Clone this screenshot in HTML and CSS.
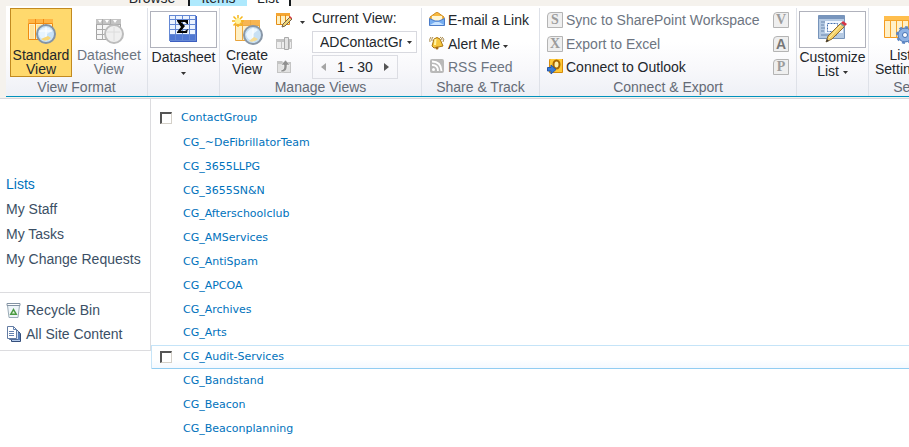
FILE: index.html
```html
<!DOCTYPE html>
<html lang="en">
<head>
<meta charset="utf-8">
<title>ContactGroup</title>
<link rel="stylesheet" href="styles.css">
</head>
<body>
<header class="ribbon-shell">
  <nav class="tabs">
    <a class="tab tab-browse" href="#">Browse</a>
    <a class="tab tab-items" href="#">Items</a>
    <a class="tab tab-list" href="#">List</a>
  </nav>
  <div class="ribbon">
    <section class="group group-format">
      <div class="group-body">
        <button class="big selected" type="button">
          <svg class="icon-big" viewBox="0 1 32 32" aria-hidden="true">
            <path d="M3.500 4.500h24v20h-24z" fill="#fff1c4" stroke="#f08a10"/>
            <path d="M3 4h25v5H3z" fill="#ffb545"/><path d="M3.500 8.500h24M10.500 4v21M18.500 4v21" stroke="#f08a10" fill="none"/>
            <path d="M5 10h4v14H5zM12 10h5v14h-5z" fill="#ffe39a"/>
            <circle cx="21" cy="19" r="9" fill="#c9e3f8" stroke="#8494a5" stroke-width="2"/>
            <path d="M14 19a7 7 0 0 1 13-3l-5 3v6a7 7 0 0 1-8-6z" fill="#e7f4ff"/><path d="M21 12v14M14 16h13" stroke="#fff" stroke-width="1"/><path d="M16 24q5 4 10-1l-3-2z" fill="#f8d778"/>
          </svg>
          <span>Standard<br>View</span>
        </button>
        <button class="big muted" type="button" disabled>
          <svg class="icon-big" viewBox="0 1 32 32" aria-hidden="true">
            <path d="M3.500 4.500h24v20h-24z" fill="#f6f6f6" stroke="#a4a4a4"/>
            <path d="M3 4h25v5H3z" fill="#c3c3c3"/><path d="M5 5h4l-2 3zM12 5h4l-2 3zM20 5h4l-2 3z" fill="#fff"/>
            <path d="M3 9.500h25M3 14.500h25M3 19.500h25M9.500 4v21M17.500 4v21" stroke="#aaa" fill="none"/>
            <circle cx="21" cy="19" r="9" fill="#efefef" stroke="#bcbcbc" stroke-width="2"/>
            <path d="M21 12v14M14 17h13" stroke="#dcdcdc"/>
          </svg>
          <span>Datasheet<br>View</span>
        </button>
      </div>
      <h2>View Format</h2>
    </section>
    <section class="group group-single">
      <div class="group-body">
        <button class="gallery" type="button">
          <span class="frame">
            <svg class="icon-big" viewBox="1 2 32 32" aria-hidden="true">
              <path d="M3 4h27v26H3z" fill="#3d5fc0"/><path d="M2 3h27v26H2z" fill="#6488d4"/>
              <path d="M3 4h5v3H3zM9 4h6v3H9zM16 4h6v3h-6zM23 4h5v3h-5zM3 8h5v4H3zM9 8h6v4H9zM16 8h6v4h-6zM23 8h5v4h-5zM3 13h5v4H3zM9 13h6v4H9zM16 13h6v4h-6zM23 13h5v4h-5zM3 18h5v4H3zM9 18h6v4H9zM16 18h6v4h-6zM23 18h5v4h-5z" fill="#edf4ff"/>
              <path d="M3 23h5v5H3zM9 23h6v5H9zM16 23h6v5h-6zM23 23h5v5h-5z" fill="#4f77d2"/>
              <path d="M10 8h11v4h-1l-2-2h-4l4 4-4 5h4l3-2-1 4H10v-1l4-5-4-6z" fill="#050505"/>
            </svg>
          </span>
          <span>Datasheet</span>
          <svg class="caret" viewBox="0 0 5 3" aria-hidden="true"><path d="M0 0h5L2.500 3z"/></svg>
        </button>
      </div>
    </section>
    <section class="group group-manage">
      <div class="group-body">
        <button class="big create" type="button">
          <svg class="icon-big" viewBox="0 1 32 32" aria-hidden="true">
            <path d="M4.500 7.500h24v20h-24z" fill="#fff0c5" stroke="#e8a33a"/><path d="M4 7h25v5H4z" fill="#f7b551"/>
            <path d="M4 12.500h25M11.500 7v21M19.500 7v21" stroke="#edaa44"/>
            <path d="M7 2v12M1 8h12M2.500 3.500l9 9M11.500 3.500l-9 9" stroke="#f6b619" stroke-width="1.500"/><circle cx="7" cy="8" r="3" fill="#fff29b"/>
            <circle cx="22" cy="22" r="9" fill="#c8e0f3" stroke="#8997a7" stroke-width="2"/><path d="M15 21q5-9 12-4l-5 4v7q-6-1-7-7z" fill="#edf7ff"/><path d="M22 15v14" stroke="#fff"/><path d="M18 28q5 2 9-2l-4-2z" fill="#f6db93"/>
          </svg>
          <span>Create<br>View</span>
        </button>
        <div class="small-stack">
          <button class="small" type="button" aria-label="Modify View">
            <svg class="icon" viewBox="0 0 16 16" aria-hidden="true"><path d="M.5 1.500h13v11H.5z" fill="#fff0c0" stroke="#e38d16"/><path d="M0 1h14v3H0z" fill="#f5a633"/><path d="M4.500 3v9M9.500 3v9" stroke="#e38d16"/><path d="M14 5l2 2-7 7-3 1 1-3z" fill="#edd474" stroke="#72614b"/><path d="M13 5l1-1 2 2-1 1z" fill="#d93942"/></svg>
            <svg class="caret" viewBox="0 0 5 3" aria-hidden="true"><path d="M0 0h5L2.500 3z"/></svg>
          </button>
          <button class="small" type="button" aria-label="Create Column" disabled>
            <svg class="icon" viewBox="0 0 16 16" aria-hidden="true"><path d="M.5 3.500h15v9H.5z" fill="#eee" stroke="#c2c2c2"/><path d="M0 3h16v3H0z" fill="#c4c4c4"/><path d="M5.500 5v8M13.500 5v8" stroke="#c2c2c2"/><path d="M8.500 1.500h4v12h-4z" fill="#e4e4e4" stroke="#aaa"/></svg>
          </button>
          <button class="small" type="button" aria-label="Navigate Up" disabled>
            <svg class="icon" viewBox="0 0 16 16" aria-hidden="true"><path d="M1 2h5l1 1h8v11H1z" fill="#c4c4c4"/><path d="M2 5h12v8H2z" fill="#e2e2e2"/><path d="M9.500 1l4.500 5h-3v2q0 5-6 5v-2q3 0 3-3V6H5z" fill="#909090" stroke="#fff" stroke-width=".5"/></svg>
          </button>
        </div>
        <div class="view-picker">
          <label for="view">Current View:</label>
          <div class="select-wrap">
            <select id="view"><option>ADContactGroups</option></select>
            <svg class="caret" viewBox="0 0 5 3" aria-hidden="true"><path d="M0 0h5L2.500 3z"/></svg>
          </div>
          <div class="pager">
            <button type="button" aria-label="Previous page" disabled><svg viewBox="0 0 5 8" aria-hidden="true"><path d="M5 0v8L0 4z" fill="#a5a5a5"/></svg></button>
            <span>1 - 30</span>
            <button type="button" aria-label="Next page"><svg viewBox="0 0 5 8" aria-hidden="true"><path d="M0 0v8l5-4z" fill="#555"/></svg></button>
          </div>
        </div>
      </div>
      <h2>Manage Views</h2>
    </section>
    <section class="group group-share">
      <div class="group-body rows">
        <button class="small" type="button">
          <svg class="icon" viewBox="0 1 16 16" aria-hidden="true"><path d="M1 6l7-5 7 5v8H1z" fill="#f7b93e" stroke="#cf8b24"/><path d="M3 5h10v7H3z" fill="#fff6d5"/><path d="M.5 7.500L6 10h4l5.500-2.500v7H.5z" fill="#76adf0" stroke="#4a7bc8"/><path d="M1 14l5-3h4l5 3z" fill="#c6e2ff"/></svg>
          E-mail a Link
        </button>
        <button class="small" type="button">
          <svg class="icon" viewBox="0 1 16 16" aria-hidden="true"><path d="M2 2Q0 4 1 7M4 2Q2 4 3 6M13 2q3 2 1 5M11 2q2 1 2 3" fill="none" stroke="#a8894b"/><path d="M3 11l2-7q3-3 6 0l3 7-9 2z" fill="#f6c63b" stroke="#a97616"/><path d="M6.500 4l-.5 6" stroke="#fff4a3" stroke-width="2"/><circle cx="8" cy="13" r="1.500" fill="#a66b13"/></svg>
          Alert Me
          <svg class="caret" viewBox="0 0 5 3" aria-hidden="true"><path d="M0 0h5L2.500 3z"/></svg>
        </button>
        <button class="small" type="button" disabled>
          <svg class="icon" viewBox="0 0 16 16" aria-hidden="true"><rect x="1" y="0" width="14" height="14" rx="2" fill="#b9b9b9"/><circle cx="4.500" cy="10.500" r="1.500" fill="#fff"/><path d="M3 6q6 0 6 6M3 2.500q9 0 9.500 9.500" fill="none" stroke="#fff" stroke-width="1.800"/></svg>
          RSS Feed
        </button>
      </div>
      <h2>Share &amp; Track</h2>
    </section>
    <section class="group group-connect">
      <div class="group-body">
        <div class="rows">
          <button class="small" type="button" disabled>
            <span class="app-icon">S</span>
            Sync to SharePoint Workspace
          </button>
          <button class="small" type="button" disabled>
            <span class="app-icon">X</span>
            Export to Excel
          </button>
          <button class="small" type="button">
            <svg class="icon" viewBox="0 1 16 16" aria-hidden="true"><path d="M3 .5h12.500v14H2.500V3z" fill="#ffc937" stroke="#d78c0b"/><ellipse cx="9.500" cy="6.500" rx="3" ry="4" fill="#fff1ac" stroke="#a76600" stroke-width="2"/><path d="M.5 9.500H4V7l5 4.500L4 16v-3H.5z" fill="#377bd8" stroke="#2456a8"/></svg>
            Connect to Outlook
          </button>
        </div>
        <div class="rows">
          <button class="small" type="button" aria-label="Create Visio Diagram" disabled><span class="app-icon">V</span></button>
          <button class="small" type="button" aria-label="Open with Access" disabled><span class="app-icon strong">A</span></button>
          <button class="small" type="button" aria-label="Open with Project" disabled><span class="app-icon">P</span></button>
        </div>
      </div>
      <h2>Connect &amp; Export</h2>
    </section>
    <section class="group group-single">
      <div class="group-body">
        <button class="gallery" type="button">
          <span class="frame">
            <svg class="icon-big" viewBox="1 2 32 32" aria-hidden="true">
              <path d="M2.500 3.500h26v23h-26z" fill="#b5cae3" stroke="#7794ba"/><path d="M3 4h25v3H3z" fill="#7895bd"/><path d="M5 10h4M5 13h3M5 16h4M5 19h3M5 23h16" stroke="#6886ad"/>
              <path d="M9 9h18v12H9z" fill="#eff6ff"/><path d="M11.500 11.500h10v8h-10z" fill="#fff" stroke="#426eac" stroke-dasharray="2 1"/>
              <path d="M25 11l4 3-13 13-6 3 2-6z" fill="#f3cf68" stroke="#8a6a32"/><path d="M26 12L13 26" stroke="#fff2ac"/><path d="M10 30l1-3 2 2z" fill="#333"/><path d="M25 11l2-2 4 3-2 2z" fill="#d83546"/><path d="M24 12l1-1 4 3-1 1z" fill="#7e98a4"/>
            </svg>
          </span>
          <span>Customize<br>List <svg class="caret" viewBox="0 0 5 3" aria-hidden="true"><path d="M0 0h5L2.500 3z"/></svg></span>
        </button>
      </div>
    </section>
    <section class="group group-settings">
      <div class="group-body">
        <button class="big" type="button">
          <svg class="icon-big" viewBox="0 1 32 32" aria-hidden="true">
            <path d="M.5.500h30v22H.5z" fill="#fff0c7" stroke="#f49a20"/><path d="M0 0h31v5H0z" fill="#ffbe4d"/><path d="M0 5.500h31M6.500 5v18M12.500 5v18M18.500 5v18M24.500 5v18" stroke="#f5a52a"/>
            <circle cx="21" cy="20" r="7" fill="#8eb2e4" stroke="#4670b1"/><circle cx="21" cy="20" r="8" fill="none" stroke="#5c86c5" stroke-width="2" stroke-dasharray="3 3.280"/><circle cx="21" cy="20" r="2.500" fill="#fff" stroke="#4670b1"/>
          </svg>
          <span>List<br>Settings</span>
        </button>
      </div>
      <h2>Settings</h2>
    </section>
  </div>
</header>
<div class="workspace">
  <nav class="sidebar">
    <div class="site-links">
      <a class="heading" href="#">Lists</a>
      <a href="#">My Staff</a>
      <a href="#">My Tasks</a>
      <a href="#">My Change Requests</a>
    </div>
    <div class="tools">
      <a href="#">
        <svg class="icon" viewBox="0 0 16 16" aria-hidden="true"><path d="M1.500 3.500h12l-1.500 12H3z" fill="#eef5f9" stroke="#9aaab6"/><path d="M1 1.500h13v2H1z" fill="#fff" stroke="#8393a3"/><path d="M7.500 6l4 7h-8z" fill="#4b9a43"/><path d="M7.500 9l1.500 2.500H6z" fill="#e6f5df"/></svg>
        Recycle Bin
      </a>
      <a href="#">
        <svg class="icon" viewBox="0 0 16 16" aria-hidden="true"><path d="M5.500 4.500h6l3 3v8h-9z" fill="#b7cdec" stroke="#344e7b"/><path d="M3.500 2.500h6l3 3v8h-9z" fill="#cfdff3" stroke="#526c98"/><path d="M1.500.500h6l3 3v9h-9z" fill="#fff" stroke="#647ca3"/><path d="M7.500.500v3h3M3 5.500h5M3 7.500h5M3 9.500h5" stroke="#6482af" fill="none"/><path d="M12 7h2v7h-2z" fill="#587eb8"/></svg>
        All Site Content
      </a>
    </div>
  </nav>
  <main>
    <table>
      <thead>
        <tr><th><input type="checkbox" aria-label="Select all"></th><th><a href="#">ContactGroup</a></th></tr>
      </thead>
      <tbody>
        <tr><td></td><td><a href="#">CG_~DeFibrillatorTeam</a></td></tr>
        <tr><td></td><td><a href="#">CG_3655LLPG</a></td></tr>
        <tr><td></td><td><a href="#">CG_3655SN&amp;N</a></td></tr>
        <tr><td></td><td><a href="#">CG_Afterschoolclub</a></td></tr>
        <tr><td></td><td><a href="#">CG_AMServices</a></td></tr>
        <tr><td></td><td><a href="#">CG_AntiSpam</a></td></tr>
        <tr><td></td><td><a href="#">CG_APCOA</a></td></tr>
        <tr><td></td><td><a href="#">CG_Archives</a></td></tr>
        <tr><td></td><td><a href="#">CG_Arts</a></td></tr>
        <tr class="hovered"><td><input type="checkbox" aria-label="Select CG_Audit-Services"></td><td><a href="#">CG_Audit-Services</a></td></tr>
        <tr><td></td><td><a href="#">CG_Bandstand</a></td></tr>
        <tr><td></td><td><a href="#">CG_Beacon</a></td></tr>
        <tr><td></td><td><a href="#">CG_Beaconplanning</a></td></tr>
      </tbody>
    </table>
  </main>
</div>
</body>
</html>
```

FILE: styles.css
```css
* { box-sizing: border-box; }

body {
  margin: 0;
  background: #fff;
  color: #23272c;
  font: 14px/16px "Liberation Sans", Arial, sans-serif;
  overflow: hidden;
}

a { text-decoration: none; }
svg { display: block; flex: none; }
button, select { font: inherit; color: inherit; }
button { margin: 0; padding: 0; border: 0; background: none; }

/* Ribbon */
.ribbon-shell {
  padding-left: 6px;
  background: #f5f2ed;
  border-bottom: 1px solid #d5d6dd;
}

.tabs {
  display: flex;
  align-items: flex-end;
  height: 6px;
  padding-left: 110px;
}

.tab { flex: none; color: #23272c; text-align: center; }
.tab-browse { width: 72px; padding: 0 12px; }
.tab-items { width: 59px; background: #aee9fd; border-left: 2px solid #15191c; }
.tab-list { width: 44px; background: #fff; border-right: 2px solid #15191c; }

.ribbon {
  display: flex;
  margin-bottom: 1px;
  overflow: hidden;
  background: linear-gradient(#fff 0 40%, #f8f8fb 70%, #eef0f6);
  border-bottom: 1px solid #0091bd;
}

.group {
  display: flex;
  flex: none;
  flex-direction: column;
  padding-bottom: 1px;
  margin-top: 2px;
  border-right: 1px solid #dee1e8;
}

.group-format { width: 142px; }
.group-single { width: 72px; }
.group-manage { width: 202px; }
.group-share { width: 118px; }
.group-connect { width: 257px; }
.group-settings { width: 100px; }

.group-body { display: flex; height: 71px; }

h2 {
  margin: 0;
  color: #646a75;
  font: inherit;
  text-align: center;
}

button:disabled, .muted { color: #6d7581; }

.icon-big { width: 32px; height: 32px; }
.icon { width: 16px; height: 16px; }
.caret { width: 5px; height: 3px; fill: #333; }

.big {
  display: flex;
  flex-direction: column;
  align-items: center;
  height: 69px;
  padding-top: 8px;
  line-height: 14px;
}

.group-format .group-body { padding-left: 4px; gap: 5px; }
.group-settings .group-body { padding-left: 6px; }
.big.selected { width: 62px; padding-top: 7px; background: #ffd96d; border: 1px solid #c28a20; }
.create { width: 54px; padding-top: 6px; gap: 2px; }

.gallery {
  display: flex;
  flex-direction: column;
  align-items: center;
  width: 100%;
  padding-top: 3px;
  line-height: 14px;
  gap: 2px;
}

.gallery .frame {
  display: flex;
  justify-content: center;
  align-items: center;
  width: 67px;
  height: 37px;
  background: #fff;
  border: 1px solid #b0b2bc;
}

.gallery > .caret { margin-top: 6px; }
.gallery span .caret { display: inline-block; vertical-align: middle; }

.small-stack, .rows {
  display: flex;
  flex-direction: column;
  align-items: flex-start;
}

.small {
  display: flex;
  align-items: center;
  height: 24px;
  gap: 3px;
  white-space: nowrap;
}

.small .caret { margin-top: 5px; }
.small-stack { width: 38px; padding-left: 2px; }
.small-stack .small { gap: 8px; }
.group-share .rows { padding-left: 7px; }
.group-connect .group-body { padding: 0 7px; justify-content: space-between; }

.app-icon {
  width: 16px;
  height: 16px;
  border: 1px solid #b4b4b4;
  border-radius: 4px 0 0 0;
  background: #efefef;
  color: #9c9c9c;
  font: bold 14px/14px "Liberation Serif", serif;
  text-align: center;
}

.app-icon.strong { color: #777; font-family: "Liberation Sans", sans-serif; }

.view-picker { display: flex; flex-direction: column; align-items: flex-start; }
.view-picker label { height: 24px; line-height: 20px; }
.select-wrap { display: grid; align-items: center; }

select {
  grid-area: 1 / 1;
  width: 105px;
  height: 22px;
  padding: 0 14px 0 7px;
  border: 1px solid #d8d9df;
  border-radius: 0;
  background: #fff;
  appearance: none;
}

.select-wrap .caret {
  grid-area: 1 / 1;
  justify-self: end;
  margin-right: 5px;
  pointer-events: none;
  z-index: 1;
}

.pager {
  display: flex;
  align-items: center;
  justify-content: space-between;
  width: 86px;
  height: 24px;
  margin-top: 2px;
  padding: 0 8px;
  border: 1px solid #dcdde3;
}

.pager svg { width: 5px; height: 8px; }

/* Page body */
.workspace { display: flex; align-items: flex-start; }

.sidebar {
  flex: none;
  width: 151px;
  border: solid #dcdcdf;
  border-width: 0 1px 1px 0;
}

.sidebar a { display: flex; align-items: center; color: #3b4f65; }
.site-links { padding: 72px 0 21px 6px; border-bottom: 1px solid #dcdcdf; }
.site-links a { height: 25px; white-space: nowrap; }
.site-links .heading { color: #0072bc; }
.tools { padding: 5px 0 4px 6px; }
.tools a { height: 24px; gap: 4px; }

main { flex: 1; font: 11px/14px "DejaVu Sans", Verdana, sans-serif; }

table { width: 100%; border-collapse: collapse; }
tr { height: 24px; }
tbody tr:nth-child(5n + 3) { height: 23px; }
thead tr { height: 32px; }
th, td { padding: 0; text-align: left; font-weight: normal; }
th { padding-top: 5px; }
td + td { padding-left: 2px; }
th:first-child, td:first-child { width: 30px; padding-left: 9px; }
table a { color: #0072bc; }

.hovered {
  background: linear-gradient(#fff 60%, #f2f8ff);
  box-shadow: inset 1px 1px #c5e4f8, inset 0 -1px #91cdf2;
}

input[type="checkbox"] {
  display: block;
  width: 12px;
  height: 12px;
  margin: 0;
  border: solid;
  border-width: 2px 1px 1px 2px;
  border-color: #555 #d4d0c8 #d4d0c8 #555;
  background: #fff;
  appearance: none;
}
```
